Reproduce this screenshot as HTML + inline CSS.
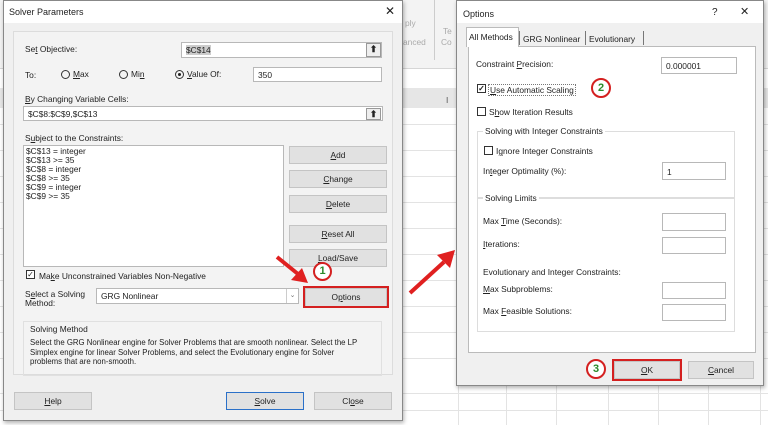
<!DOCTYPE html>
<html><head><meta charset="utf-8"><style>
*{box-sizing:border-box;margin:0;padding:0}
html,body{width:768px;height:425px;overflow:hidden}
body{background:#fff;font-family:"Liberation Sans",sans-serif;font-size:8.4px;color:#222;position:relative}
.a{position:absolute}
.inp{position:absolute;background:#fff;border:1px solid #b8b8b8;padding:2px 4px;font-size:8.4px}
.btn{position:absolute;background:#e1e1e1;border:1px solid #c4c4c4;text-align:center;font-size:8.4px;line-height:16px}
.lbl{position:absolute;font-size:8.4px;white-space:nowrap}
.rad{display:inline-block;width:9px;height:9px;border:1px solid #333;border-radius:50%;vertical-align:middle;margin-right:3px;position:relative}
.cb{position:absolute;width:9px;height:9px;border:1px solid #333;background:#fff;font-size:8px;line-height:7px;text-align:center}
.hl{position:absolute;left:0;width:768px;height:1px;background:#e3e3e3}
.vl{position:absolute;top:385px;height:40px;width:1px;background:#e3e3e3}
.circ{position:absolute;border:2px solid #d42020;border-radius:50%;background:#fff;color:#2a8a2a;font-weight:bold;text-align:center}
</style></head><body>
<div class="a" style="left:0;top:0;width:768px;height:68px;background:#f3f3f3"></div>
<div class="a" style="left:0;top:68px;width:768px;height:1px;background:#d6d6d6"></div>
<div class="a" style="left:0;top:88px;width:768px;height:20px;background:#e6e6e6"></div>
<div class="lbl" style="left:405px;top:18px;color:#aaa">ply</div>
<div class="lbl" style="left:403px;top:37px;color:#aaa">anced</div>
<div class="lbl" style="left:443px;top:26px;color:#aaa">Te</div>
<div class="lbl" style="left:441px;top:37px;color:#aaa">Co</div>
<div class="a" style="left:434px;top:0;width:1px;height:60px;background:#ccc"></div>
<div class="lbl" style="left:446px;top:95px;color:#555">I</div>
<div class="hl" style="top:124px"></div><div class="hl" style="top:150px"></div><div class="hl" style="top:176px"></div><div class="hl" style="top:202px"></div><div class="hl" style="top:228px"></div><div class="hl" style="top:254px"></div><div class="hl" style="top:280px"></div><div class="hl" style="top:306px"></div><div class="hl" style="top:332px"></div><div class="hl" style="top:358px"></div><div class="hl" style="top:393px"></div><div class="hl" style="top:410px"></div>
<div class="vl" style="left:458px;top:90px;height:335px"></div><div class="vl" style="left:506px"></div><div class="vl" style="left:556px"></div><div class="vl" style="left:608px"></div><div class="vl" style="left:658px"></div><div class="vl" style="left:708px"></div><div class="vl" style="left:760px"></div>

<div class="a" style="left:3px;top:0;width:400px;height:421px;background:#f0f0f0;border:1px solid #888;box-shadow:1px 2px 4px rgba(0,0,0,.3)"></div>
<div class="a" style="left:4px;top:1px;width:398px;height:22px;background:#fff"></div>
<div class="lbl" style="left:9px;top:7px;font-size:9px">Solver Parameters</div>
<div class="lbl" style="left:385px;top:4px;font-size:12px">✕</div>
<div class="a" style="left:13px;top:31px;width:380px;height:344px;border:1px solid #dcdcdc;background:#f3f3f3"></div>
<div class="lbl" style="left:25px;top:44px">Se<u>t</u> Objective:</div>
<div class="inp" style="left:181px;top:42px;width:201px;height:16px"><span style="background:#ccc">$C$14</span></div>
<div class="a" style="left:366px;top:43px;width:15px;height:14px;border:1px solid #999;background:#eee;text-align:center;font-size:9px;font-weight:bold">⬆</div>
<div class="lbl" style="left:25px;top:70px">To:</div>
<div class="lbl" style="left:61px;top:69px"><span class="rad"></span><u>M</u>ax</div>
<div class="lbl" style="left:119px;top:69px"><span class="rad"></span>Mi<u>n</u></div>
<div class="lbl" style="left:175px;top:69px"><span class="rad"><span class="a" style="left:2px;top:2px;width:3px;height:3px;background:#222;border-radius:50%"></span></span><u>V</u>alue Of:</div>
<div class="inp" style="left:253px;top:67px;width:129px;height:15px">350</div>
<div class="lbl" style="left:25px;top:94px"><u>B</u>y Changing Variable Cells:</div>
<div class="inp" style="left:23px;top:106px;width:360px;height:15px">$C$8:$C$9,$C$13</div>
<div class="a" style="left:366px;top:108px;width:15px;height:12px;border:1px solid #999;background:#eee;text-align:center;font-size:9px;font-weight:bold">⬆</div>
<div class="lbl" style="left:25px;top:133px">S<u>u</u>bject to the Constraints:</div>
<div class="inp" style="left:23px;top:145px;width:261px;height:122px;line-height:9px;padding:1px 2px">$C$13 = integer<br>$C$13 &gt;= 35<br>$C$8 = integer<br>$C$8 &gt;= 35<br>$C$9 = integer<br>$C$9 &gt;= 35</div>
<div class="btn" style="left:289px;top:146px;width:98px;height:18px"><u>A</u>dd</div>
<div class="btn" style="left:289px;top:170px;width:98px;height:18px"><u>C</u>hange</div>
<div class="btn" style="left:289px;top:195px;width:98px;height:18px"><u>D</u>elete</div>
<div class="btn" style="left:289px;top:225px;width:98px;height:18px"><u>R</u>eset All</div>
<div class="btn" style="left:289px;top:249px;width:98px;height:18px"><u>L</u>oad/Save</div>
<div class="cb" style="left:26px;top:270px">✓</div>
<div class="lbl" style="left:39px;top:271px">Ma<u>k</u>e Unconstrained Variables Non-Negative</div>
<div class="lbl" style="left:25px;top:290px;line-height:9px">S<u>e</u>lect a Solving<br>Method:</div>
<div class="inp" style="left:96px;top:288px;width:203px;height:16px">GRG Nonlinear</div>
<div class="a" style="left:286px;top:289px;width:12px;height:14px;border-left:1px solid #ccc;font-size:7px;text-align:center;line-height:14px;color:#777">⌄</div>
<div class="btn" style="left:305px;top:288px;width:82px;height:19px;line-height:17px">O<u>p</u>tions</div>
<div class="a" style="left:303px;top:286px;width:86px;height:22px;border:2px solid #d42020"></div>
<div class="a" style="left:23px;top:321px;width:359px;height:55px;border:1px solid #e0e0e0"></div>
<div class="lbl" style="left:30px;top:324px">Solving Method</div>
<div class="lbl" style="left:30px;top:338px;line-height:9.5px;font-size:7.8px">Select the GRG Nonlinear engine for Solver Problems that are smooth nonlinear. Select the LP<br>Simplex engine for linear Solver Problems, and select the Evolutionary engine for Solver<br>problems that are non-smooth.</div>
<div class="btn" style="left:14px;top:392px;width:78px;height:18px"><u>H</u>elp</div>
<div class="btn" style="left:226px;top:392px;width:78px;height:18px;border:1px solid #2a70c8"><u>S</u>olve</div>
<div class="btn" style="left:314px;top:392px;width:78px;height:18px">Cl<u>o</u>se</div>

<svg class="a" style="left:0;top:0" width="768" height="425">
<line x1="277" y1="257" x2="298" y2="274" stroke="#e02020" stroke-width="4"/>
<polygon points="308,283 291,280 302,268" fill="#e02020"/>
<line x1="410" y1="293" x2="444" y2="262" stroke="#e02020" stroke-width="4"/>
<polygon points="455,250 450,268 437,255" fill="#e02020"/>
<ellipse cx="523" cy="88" rx="62" ry="11" fill="none" stroke="#d42020" stroke-width="2"/>
</svg>
<div class="circ" style="left:313px;top:262px;width:19px;height:19px;font-size:11px;line-height:15px">1</div>

<div class="a" style="left:456px;top:0;width:308px;height:386px;background:#f0f0f0;border:1px solid #888;box-shadow:1px 2px 4px rgba(0,0,0,.3)"></div>
<div class="a" style="left:457px;top:1px;width:306px;height:22px;background:#fff"></div>
<div class="lbl" style="left:463px;top:9px;font-size:9px">Options</div>
<div class="lbl" style="left:712px;top:7px;font-size:10px">?</div>
<div class="lbl" style="left:740px;top:5px;font-size:11px">✕</div>
<div class="a" style="left:468px;top:46px;width:288px;height:307px;background:#fff;border:1px solid #bbb"></div>
<div class="a" style="left:466px;top:27px;width:53px;height:20px;background:#fff;border:1px solid #bbb;border-bottom:none"></div>
<div class="lbl" style="left:469px;top:32px">All Methods</div>
<div class="lbl" style="left:523px;top:34px">GRG Nonlinear</div>
<div class="a" style="left:519px;top:31px;width:1px;height:14px;background:#777"></div>
<div class="a" style="left:585px;top:31px;width:1px;height:14px;background:#777"></div>
<div class="lbl" style="left:589px;top:34px">Evolutionary</div>
<div class="a" style="left:643px;top:31px;width:1px;height:14px;background:#777"></div>
<div class="lbl" style="left:476px;top:59px">Constraint <u>P</u>recision:</div>
<div class="inp" style="left:661px;top:57px;width:76px;height:17px;padding-top:3px">0.000001</div>
<div class="cb" style="left:477px;top:84px;font-weight:bold">✓</div>
<div class="lbl" style="left:488px;top:84px;border:1px dotted #777;padding:0 1px"><u>U</u>se Automatic Scaling</div>
<div class="circ" style="left:591px;top:78px;width:20px;height:20px;font-size:11px;line-height:16px">2</div>
<div class="cb" style="left:477px;top:107px"></div>
<div class="lbl" style="left:489px;top:107px">S<u>h</u>ow Iteration Results</div>
<div class="a" style="left:477px;top:131px;width:258px;height:67px;border:1px solid #ddd"></div>
<div class="lbl" style="left:483px;top:126px;background:#fff;padding:0 2px">Solving with Integer Constraints</div>
<div class="cb" style="left:484px;top:146px"></div>
<div class="lbl" style="left:496px;top:146px">I<u>g</u>nore Integer Constraints</div>
<div class="lbl" style="left:483px;top:166px">In<u>t</u>eger Optimality (%):</div>
<div class="inp" style="left:662px;top:162px;width:64px;height:18px;padding-top:4px">1</div>
<div class="a" style="left:477px;top:198px;width:258px;height:134px;border:1px solid #ddd"></div>
<div class="lbl" style="left:483px;top:193px;background:#fff;padding:0 2px">Solving Limits</div>
<div class="lbl" style="left:483px;top:216px">Max <u>T</u>ime (Seconds):</div>
<div class="inp" style="left:662px;top:213px;width:64px;height:18px"></div>
<div class="lbl" style="left:483px;top:239px"><u>I</u>terations:</div>
<div class="inp" style="left:662px;top:237px;width:64px;height:17px"></div>
<div class="lbl" style="left:483px;top:267px">Evolutionary and Integer Constraints:</div>
<div class="lbl" style="left:483px;top:284px"><u>M</u>ax Subproblems:</div>
<div class="inp" style="left:662px;top:282px;width:64px;height:17px"></div>
<div class="lbl" style="left:483px;top:306px">Max <u>F</u>easible Solutions:</div>
<div class="inp" style="left:662px;top:304px;width:64px;height:17px"></div>
<div class="btn" style="left:614px;top:361px;width:66px;height:18px"><u>O</u>K</div>
<div class="a" style="left:612px;top:359px;width:70px;height:22px;border:2px solid #d42020"></div>
<div class="btn" style="left:688px;top:361px;width:66px;height:18px"><u>C</u>ancel</div>
<div class="circ" style="left:586px;top:359px;width:20px;height:20px;font-size:11px;line-height:16px">3</div>
</body></html>
